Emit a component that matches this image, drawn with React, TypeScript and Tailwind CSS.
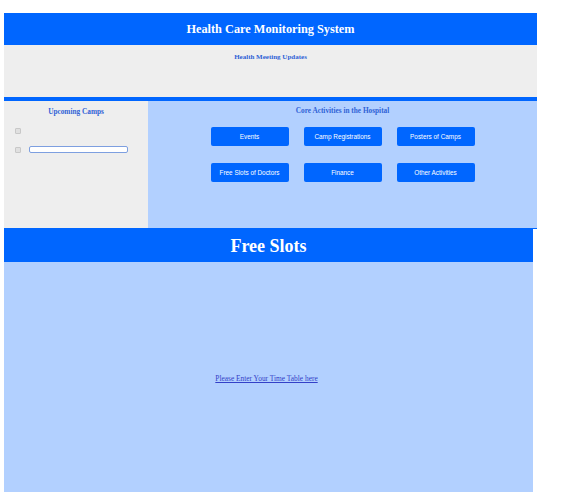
import React from "react";

const serif = { fontFamily: '"Liberation Serif", "Times New Roman", serif' };
const sans = { fontFamily: '"Liberation Sans", Arial, sans-serif' };

const buttons = [
  "Events",
  "Camp Registrations",
  "Posters of Camps",
  "Free Slots of Doctors",
  "Finance",
  "Other Activities",
];

export default function App() {
  return (
    <div className="min-h-[492px] bg-white pt-[13px] pl-[4px]" style={serif}>
      <div className="w-[533px]">
        <div className="h-[32px] bg-[#0066ff] flex items-center justify-center">
          <span className="text-white font-bold text-[12.3px] leading-none">
            Health Care Monitoring System
          </span>
        </div>
        <div className="h-[52px] bg-[#eeeeee] pt-[8px] text-center">
          <span className="text-[#2f62d6] font-bold text-[7px] leading-[8px] block">
            Health Meeting Updates
          </span>
        </div>
        <div className="h-[4px] bg-[#0066ff]" />
        <div className="flex h-[127px]">
          <div className="w-[144px] bg-[#eeeeee] pt-[7px]">
            <div className="text-center text-[#2f62d6] font-bold text-[7.3px] leading-[8px]">
              Upcoming Camps
            </div>
            <div className="mt-[11px] pl-[11px] flex flex-col gap-[12px]">
              <div className="h-[7px] flex items-center">
                <span className="w-[6px] h-[6px] rounded-[1px] bg-[#e0e0e0] border border-[#c8c8c8]" />
              </div>
              <div className="h-[7px] flex items-center gap-[8px]">
                <span className="w-[6px] h-[6px] rounded-[1px] bg-[#e0e0e0] border border-[#c8c8c8]" />
                <span className="w-[99px] h-[7px] bg-white border border-[#7d9fe0] rounded-[2px]" />
              </div>
            </div>
          </div>
          <div className="flex-1 bg-[#b2d0ff] pt-[6px] flex flex-col items-center">
            <div className="text-[#2f62d6] font-bold text-[7.3px] leading-[8px]">
              Core Activities in the Hospital
            </div>
            <div className="mt-[12px] grid grid-cols-[78px_78px_78px] gap-x-[15px] gap-y-[17px]">
              {buttons.map((b) => (
                <div
                  key={b}
                  className="h-[19px] bg-[#0066ff] rounded-[2px] flex items-center justify-center text-white text-[6.4px] whitespace-nowrap"
                  style={sans}
                >
                  {b}
                </div>
              ))}
            </div>
          </div>
        </div>
        <div className="h-[1px] bg-[#0066ff]" />
      </div>
      <div className="w-[529px]">
        <div className="h-[33px] bg-[#0066ff] flex items-center justify-center">
          <span className="text-white font-bold text-[18px] leading-none">Free Slots</span>
        </div>
        <div className="h-[230px] bg-[#b2d0ff] flex items-center justify-center">
          <a
            href="#"
            className="text-[#3340c8] underline text-[7.4px] leading-[8px] ml-[-4px] mt-[4px]"
          >
            Please Enter Your Time Table here
          </a>
        </div>
      </div>
    </div>
  );
}
